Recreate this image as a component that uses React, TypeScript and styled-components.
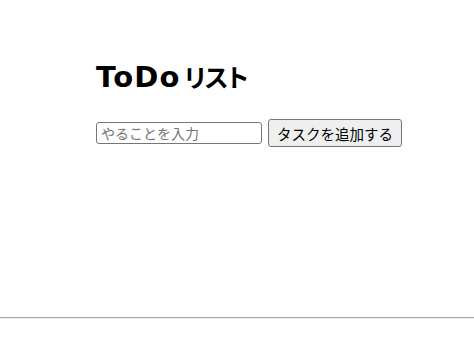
import { styled, createGlobalStyle } from "styled-components";

const GlobalStyle = createGlobalStyle`
    body {
        margin: 0;
        background: #ffffff;
        font-family: "Noto Sans CJK JP", "Noto Sans", sans-serif;
        color: #000000;
    }
`;

const TodoPage = styled.main`
    height: 317px;
    padding: 63px 0 0 96px;
    box-sizing: border-box;
`;

const TodoTitle = styled.h1`
    margin: 0 0 28px;
    height: 28px;
    font-family: "DejaVu Sans", "Noto Sans CJK JP", sans-serif;
    font-size: 29px;
    line-height: 28px;
    font-weight: 700;
    letter-spacing: 1.2px;
    white-space: nowrap;
`;

const TitleKana = styled.span`
    font-family: "Noto Sans CJK JP", sans-serif;
    font-size: 25px;
    line-height: 22px;
    letter-spacing: -4px;
    margin-left: 2px;
`;

const TodoForm = styled.form`
    display: flex;
    align-items: center;
    gap: 6px;
`;

const TodoInput = styled.input`
    width: 166px;
    height: 22px;
    box-sizing: border-box;
    padding: 0 4px;
    border: 1px solid #767676;
    border-radius: 3px;
    font-family: inherit;
    font-size: 14px;
    &::placeholder {
        color: #757575;
    }
`;

const TodoButton = styled.button`
    width: 134px;
    height: 28px;
    box-sizing: border-box;
    padding: 0;
    border: 1px solid #767676;
    border-radius: 3px;
    background: #efefef;
    font-family: inherit;
    font-size: 14.5px;
    color: #000000;
`;

const Divider = styled.hr`
    margin: 0;
    border: none;
    border-top: 1px solid #a9a9a9;
    border-bottom: 1px solid #ececec;
`;

export default function App() {
    return (
        <>
            <GlobalStyle />
            <TodoPage>
                <TodoTitle>
                    ToDo<TitleKana>リスト</TitleKana>
                </TodoTitle>
                <TodoForm onSubmit={(e) => e.preventDefault()}>
                    <TodoInput placeholder="やることを入力" />
                    <TodoButton type="submit">タスクを追加する</TodoButton>
                </TodoForm>
            </TodoPage>
            <Divider />
        </>
    );
}
